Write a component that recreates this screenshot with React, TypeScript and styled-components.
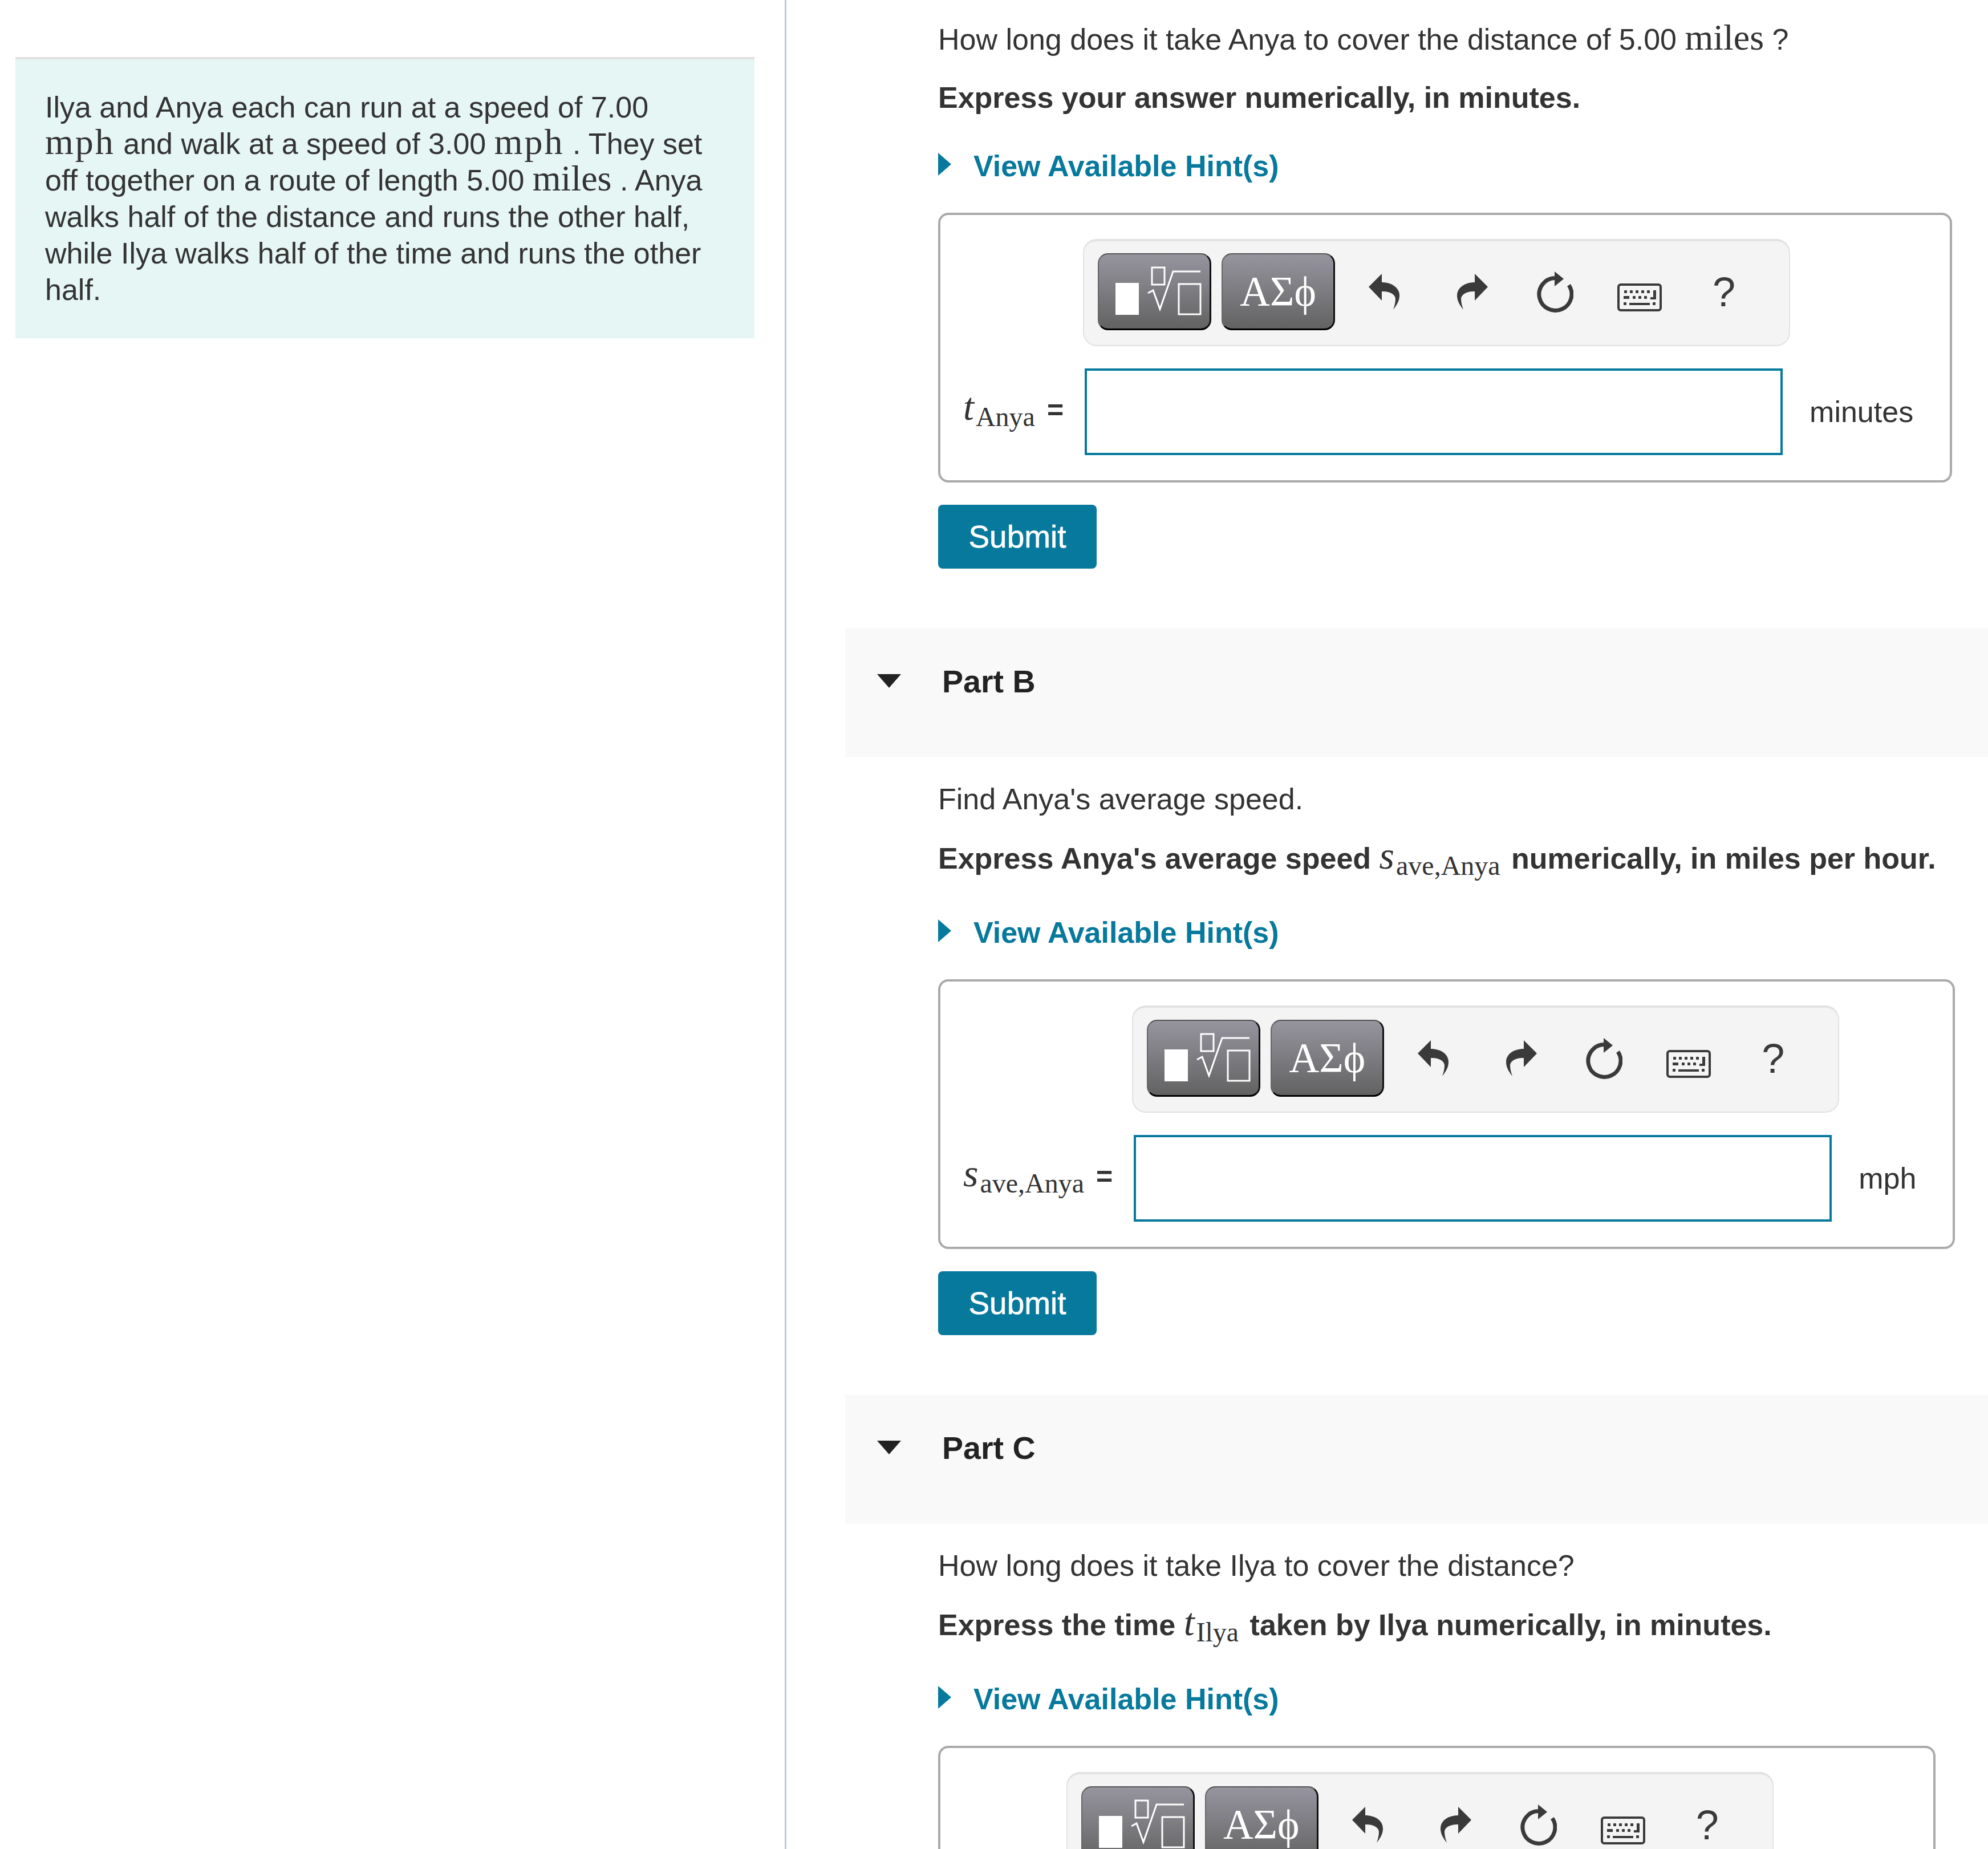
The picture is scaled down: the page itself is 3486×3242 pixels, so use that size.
import React from 'react'
import styled, { createGlobalStyle } from 'styled-components'

const GlobalStyle = createGlobalStyle`
  html, body {
    margin: 0;
    padding: 0;
    background: #fff;
  }
  body {
    font-family: "Liberation Sans", Arial, sans-serif;
    font-size: 52px;
    line-height: 64px;
    color: #333;
  }
`

const Page = styled.div`
  display: grid;
  grid-template-columns: 1379px 1fr;
  width: 3486px;
  height: 3242px;
  overflow: hidden;
`

const Sidebar = styled.aside`
  padding: 100px 53px 0 27px;
  border-right: 3px solid #bccbd8;
`

const Intro = styled.div`
  background: #e6f6f5;
  border-top: 4px solid #e0e0e0;
  padding: 52px 78px 53px 52px;
`

const Main = styled.main`
  padding: 37px 0 0 103px;
`

const PartBody = styled.div`
  margin-left: 163px;
`

const PartHeader = styled.header`
  display: flex;
  align-items: flex-start;
  height: 227px;
  margin-top: 104px;
  padding: 62px 0 0 56px;
  box-sizing: border-box;
  background: #f9f9f9;
`

const PartCaret = styled.span`
  width: 0;
  height: 0;
  margin-top: 19px;
  border-left: 21px solid transparent;
  border-right: 21px solid transparent;
  border-top: 24px solid #222;
`

const PartTitle = styled.h2`
  margin: 0 0 0 72px;
  font-size: 55.5px;
  line-height: 64px;
  font-weight: 700;
  color: #222;
`

const Prompt = styled.p<{ $first?: boolean }>`
  margin: ${(p) => (p.$first ? '0' : '41px')} 0 0;
`

const Instruction = styled.p<{ $tall?: boolean }>`
  margin: ${(p) => (p.$tall ? '40px' : '38px')} 0 0;
  padding-bottom: ${(p) => (p.$tall ? '10px' : '0')};
  font-weight: 700;
`

const Roman = styled.span<{ $tracking: number }>`
  font-family: "Liberation Serif", "Times New Roman", serif;
  font-size: 64px;
  letter-spacing: ${(p) => p.$tracking}px;
  line-height: 0;
`

const MathVar = styled.i`
  font-family: "Liberation Serif", "Times New Roman", serif;
  font-size: 68px;
  font-weight: 400;
  letter-spacing: 3px;
  line-height: 0;
`

const MathSub = styled.sub`
  margin-right: 5px;
  font-family: "Liberation Serif", "Times New Roman", serif;
  font-size: 48px;
  font-weight: 400;
  line-height: 0;
  vertical-align: -11px;
`

const HintToggle = styled.div`
  display: flex;
  align-items: center;
  margin-top: 56px;
  color: #07799d;
  font-weight: 700;
`

const HintCaret = styled.span`
  width: 0;
  height: 0;
  margin: -6px 39px 0 0;
  border-top: 20px solid transparent;
  border-bottom: 20px solid transparent;
  border-left: 23px solid #07799d;
`

const AnswerBox = styled.div`
  display: grid;
  grid-template-columns: auto 1240px auto;
  align-items: center;
  row-gap: 39px;
  width: fit-content;
  box-sizing: border-box;
  margin-top: 50px;
  padding: 42px 64px 44px 40px;
  border: 4px solid #aaa;
  border-radius: 18px;
`

const Toolbar = styled.div`
  grid-column: 2;
  grid-row: 1;
  display: flex;
  align-items: flex-start;
  height: 188px;
  box-sizing: border-box;
  padding: 21px 0 0 24px;
  background: #f4f4f4;
  border: 2px solid #e2e2e2;
  border-top-width: 4px;
  border-radius: 24px;
`

const TemplateButton = styled.div`
  display: flex;
  align-items: center;
  justify-content: center;
  width: 199px;
  height: 135px;
  box-sizing: border-box;
  margin-right: 18px;
  border-style: solid;
  border-width: 2px 3px 3px 2px;
  border-color: #555 #111 #000 #666;
  border-radius: 18px;
  background: linear-gradient(#96959f, #626262);
  color: #fff;
  font-family: "Liberation Serif", "Times New Roman", serif;
  font-size: 73px;
  line-height: 1;
`

const ToolIcon = styled.svg<{ $left: number; $top: number }>`
  flex: none;
  margin: ${(p) => p.$top}px 0 0 ${(p) => p.$left}px;
  fill: #3a3a3a;
`

const HelpMark = styled.span`
  margin: 36px 0 0 89px;
  font-size: 72px;
  line-height: 64px;
  color: #3a3a3a;
`

const Label = styled.div`
  grid-column: 1;
  grid-row: 2;
  padding: 0 34px 8px 0;
  white-space: nowrap;
`

const Equals = styled.span`
  margin-left: 16px;
  font-size: 50px;
  font-weight: 700;
`

const AnswerInput = styled.div`
  grid-column: 2;
  grid-row: 2;
  height: 152px;
  width: 1224px;
  margin-left: 3px;
  box-sizing: border-box;
  border: 4px solid #07799d;
`

const Unit = styled.div`
  grid-column: 3;
  grid-row: 2;
  padding-left: 34px;
`

const SubmitButton = styled.button`
  display: block;
  width: 278px;
  height: 112px;
  margin-top: 39px;
  padding: 0;
  border: 0;
  border-radius: 8px;
  background: #07799d;
  color: #fff;
  font-family: "Liberation Sans", Arial, sans-serif;
  font-size: 55px;
  -webkit-text-stroke: 0.6px #fff;
`

const RootIcon = () => (
  <svg width="194" height="130" viewBox="2 2 194 130">
    <rect x="31" y="52" width="41" height="56" fill="#fff" />
    <g fill="none" stroke="#fff" strokeWidth="3">
      <rect x="95" y="25" width="22" height="30" />
      <rect x="142" y="54" width="38" height="53" />
      <path d="M88 70 L97 65 L109 98 L132 32 H180" />
    </g>
  </svg>
)

const UndoIcon = ({ flip, left }: { flip?: boolean; left: number }) => (
  <ToolIcon $left={left} $top={36} width="54" height="63" viewBox="0 0 54 63">
    <path
      transform={flip ? 'matrix(-1 0 0 1 54 0)' : undefined}
      d="M23 0 L0 23 L23 47 L23 31 C36 30 47 36 47 44 C47 51 45 57 43 63 C50 54 54 47 54 38 C54 24 40 15 23 15 Z"
    />
  </ToolIcon>
)

const ReloadIcon = () => (
  <ToolIcon $left={86} $top={32} width="64" height="73" viewBox="0 0 64 73">
    <path d="M31 0 L47 13 L31 26 Z" />
    <path
      d="M31 11.5 A28.5 28.5 0 1 0 56 24"
      fill="none"
      stroke="#3a3a3a"
      strokeWidth="7"
    />
  </ToolIcon>
)

const keyDots = [
  [14, 14], [24, 14], [34, 14], [44, 14], [54, 14],
  [29, 24], [39, 24], [49, 24],
  [13, 35], [64, 35],
]

const KeyboardIcon = () => (
  <ToolIcon $left={77} $top={53} width="78" height="49" viewBox="0 0 78 49">
    <rect x="2" y="2" width="74" height="45" rx="4" fill="none" stroke="#3a3a3a" strokeWidth="4" />
    {keyDots.map(([x, y]) => (
      <rect key={`${x}-${y}`} x={x - 2} y={y - 2} width="5" height="5" rx="1" />
    ))}
    <rect x="11" y="22" width="10" height="5" />
    <path d="M63 12 H68 V28 H58 V24 H63 Z" />
    <rect x="21" y="34" width="36" height="4" />
  </ToolIcon>
)

type AnswerProps = {
  variable: string
  subscript: string
  unit: string
}

const Answer = ({ variable, subscript, unit }: AnswerProps) => (
  <>
    <AnswerBox>
      <Toolbar>
        <TemplateButton>
          <RootIcon />
        </TemplateButton>
        <TemplateButton>ΑΣϕ</TemplateButton>
        <UndoIcon left={41} />
        <UndoIcon flip left={101} />
        <ReloadIcon />
        <KeyboardIcon />
        <HelpMark>?</HelpMark>
      </Toolbar>
      <Label>
        <MathVar>{variable}</MathVar>
        <MathSub>{subscript}</MathSub>
        <Equals>=</Equals>
      </Label>
      <AnswerInput />
      <Unit>{unit}</Unit>
    </AnswerBox>
    <SubmitButton>Submit</SubmitButton>
  </>
)

const Hint = () => (
  <HintToggle>
    <HintCaret />
    View Available Hint(s)
  </HintToggle>
)

const Part = ({ name }: { name: string }) => (
  <PartHeader>
    <PartCaret />
    <PartTitle>{name}</PartTitle>
  </PartHeader>
)

export default function App() {
  return (
    <Page>
      <GlobalStyle />
      <Sidebar>
        <Intro>
          Ilya and Anya each can run at a speed of 7.00 <Roman $tracking={3}>mph</Roman> and walk at
          a speed of 3.00 <Roman $tracking={3}>mph</Roman> . They set off together on a route of
          length 5.00 <Roman $tracking={0}>miles</Roman> . Anya walks half of the distance and runs
          the other half, while Ilya walks half of the time and runs the other half.
        </Intro>
      </Sidebar>
      <Main>
        <PartBody>
          <Prompt $first>
            How long does it take Anya to cover the distance of 5.00{' '}
            <Roman $tracking={0}>miles</Roman> ?
          </Prompt>
          <Instruction>Express your answer numerically, in minutes.</Instruction>
          <Hint />
          <Answer variable="t" subscript="Anya" unit="minutes" />
        </PartBody>

        <Part name="Part B" />
        <PartBody>
          <Prompt>Find Anya's average speed.</Prompt>
          <Instruction $tall>
            Express Anya's average speed <MathVar>s</MathVar>
            <MathSub>ave,Anya</MathSub> numerically, in miles per hour.
          </Instruction>
          <Hint />
          <Answer variable="s" subscript="ave,Anya" unit="mph" />
        </PartBody>

        <Part name="Part C" />
        <PartBody>
          <Prompt>How long does it take Ilya to cover the distance?</Prompt>
          <Instruction $tall>
            Express the time <MathVar>t</MathVar>
            <MathSub>Ilya</MathSub> taken by Ilya numerically, in minutes.
          </Instruction>
          <Hint />
          <Answer variable="t" subscript="Ilya" unit="minutes" />
        </PartBody>
      </Main>
    </Page>
  )
}
